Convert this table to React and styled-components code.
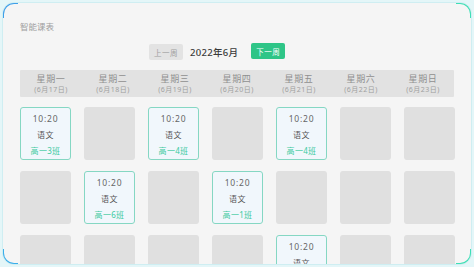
import React from "react";
import styled, { createGlobalStyle } from "styled-components";

const DAYS = [
  { name: "星期一", date: "(6月17日)" },
  { name: "星期二", date: "(6月18日)" },
  { name: "星期三", date: "(6月19日)" },
  { name: "星期四", date: "(6月20日)" },
  { name: "星期五", date: "(6月21日)" },
  { name: "星期六", date: "(6月22日)" },
  { name: "星期日", date: "(6月23日)" },
];

// one row per week slot, null = empty cell
const ROWS = [
  [{ time: "10:20", subject: "语文", cls: "高一3班" }, null, { time: "10:20", subject: "语文", cls: "高一4班" }, null, { time: "10:20", subject: "语文", cls: "高一4班" }, null, null],
  [null, { time: "10:20", subject: "语文", cls: "高一6班" }, null, { time: "10:20", subject: "语文", cls: "高一1班" }, null, null, null],
  [null, null, null, null, { time: "10:20", subject: "语文", cls: "高一2班" }, null, null],
];

const GlobalStyle = createGlobalStyle`
  html, body {
    margin: 0;
    padding: 0;
    background: #e4f6f8;
    font-family: "Noto Sans", "Noto Sans CJK SC", sans-serif;
  }
`;

const App = () => {
  return (
    <>
      <GlobalStyle />
      <S.Panel>
        <S.Corner $pos="tl" />
        <S.Corner $pos="tr" />
        <S.Corner $pos="bl" />
        <S.Corner $pos="br" />
        <S.Title>智能课表</S.Title>
        <S.Nav>
          <S.NavButton>上一周</S.NavButton>
          <S.Month>2022年6月</S.Month>
          <S.NavButton $primary>下一周</S.NavButton>
        </S.Nav>
        <S.Header>
          {DAYS.map(day => (
            <S.HeaderCell key={day.name}>
              <S.DayName>{day.name}</S.DayName>
              <S.DayDate>{day.date}</S.DayDate>
            </S.HeaderCell>
          ))}
        </S.Header>
        <S.Grid>
          {ROWS.map((row, r) =>
            row.map((lesson, c) =>
              lesson ? (
                <S.Lesson key={`${r}-${c}`} $active>
                  <S.Time>{lesson.time}</S.Time>
                  <S.Subject>{lesson.subject}</S.Subject>
                  <S.ClassName>{lesson.cls}</S.ClassName>
                </S.Lesson>
              ) : (
                <S.Lesson key={`${r}-${c}`} />
              )
            )
          )}
        </S.Grid>
      </S.Panel>
    </>
  );
};

const cornerColor = {
  tl: "#3d9fe9",
  tr: "#3fdfb6",
  bl: "#3aaeea",
  br: "#3fdfb6",
};

const S = {
  Panel: styled.div`
    position: relative;
    box-sizing: border-box;
    margin: 2px;
    height: 263px;
    border: 1px solid #cfeef2;
    border-radius: 12px;
    background: #f5f5f5;
    padding: 18px 17px 0 17px;
    overflow: hidden;
  `,
  Corner: styled.span`
    position: absolute;
    width: 16px;
    height: 16px;
    box-sizing: border-box;
    border: 0 solid ${p => cornerColor[p.$pos]};
    ${p => (p.$pos[0] === "t" ? "top: -1px; border-top-width: 2px;" : "bottom: -1px; border-bottom-width: 2px;")}
    ${p => (p.$pos[1] === "l" ? "left: -1px; border-left-width: 2px;" : "right: -1px; border-right-width: 2px;")}
    ${p =>
      ({
        tl: "border-top-left-radius: 12px;",
        tr: "border-top-right-radius: 12px;",
        bl: "border-bottom-left-radius: 12px;",
        br: "border-bottom-right-radius: 12px;",
      })[p.$pos]}
  `,
  Title: styled.div`
    font-size: 8.5px;
    line-height: 12px;
    color: #a0a0a0;
  `,
  Nav: styled.div`
    display: flex;
    align-items: center;
    height: 16px;
    margin-top: 11px;
    padding-left: 129px;
  `,
  NavButton: styled.div`
    width: 34px;
    height: 16px;
    border-radius: 2px;
    display: flex;
    align-items: center;
    justify-content: center;
    font-size: 7.5px;
    letter-spacing: 0.5px;
    color: ${p => (p.$primary ? "#ffffff" : "#a0a0a0")};
    background: ${p => (p.$primary ? "#2ec587" : "#e3e3e3")};
    margin-top: ${p => (p.$primary ? "-2px" : "0")};
  `,
  Month: styled.div`
    margin: 0 13px 0 7px;
    font-size: 9.5px;
    font-weight: 500;
    color: #3a3a3a;
    letter-spacing: 0.3px;
  `,
  Header: styled.div`
    display: grid;
    grid-template-columns: repeat(7, 1fr);
    height: 27px;
    margin-top: 10px;
    background: #e2e2e2;
    border-radius: 1px;
  `,
  HeaderCell: styled.div`
    display: flex;
    flex-direction: column;
    align-items: center;
    justify-content: center;
  `,
  DayName: styled.div`
    font-size: 9px;
    line-height: 12px;
    color: #909090;
    letter-spacing: 0.6px;
  `,
  DayDate: styled.div`
    font-size: 7px;
    line-height: 9px;
    color: #a0a0a0;
    letter-spacing: 0.5px;
  `,
  Grid: styled.div`
    display: grid;
    grid-template-columns: repeat(7, 51px);
    grid-auto-rows: 53px;
    column-gap: 13px;
    row-gap: 11px;
    margin-top: 10px;
  `,
  Lesson: styled.div`
    box-sizing: border-box;
    border-radius: 3px;
    display: flex;
    flex-direction: column;
    align-items: center;
    gap: 4px;
    padding-top: 5px;
    background: ${p => (p.$active ? "#f1f7fc" : "#e0e0e0")};
    border: ${p => (p.$active ? "1px solid #85d7c3" : "none")};
  `,
  Time: styled.div`
    font-size: 8.5px;
    line-height: 12px;
    color: #666;
    letter-spacing: 0.8px;
  `,
  Subject: styled.div`
    font-size: 8px;
    line-height: 12px;
    color: #555;
    letter-spacing: 0.4px;
  `,
  ClassName: styled.div`
    font-size: 8px;
    line-height: 12px;
    color: #3ccaa0;
    letter-spacing: 0.3px;
  `,
};

export default App;
